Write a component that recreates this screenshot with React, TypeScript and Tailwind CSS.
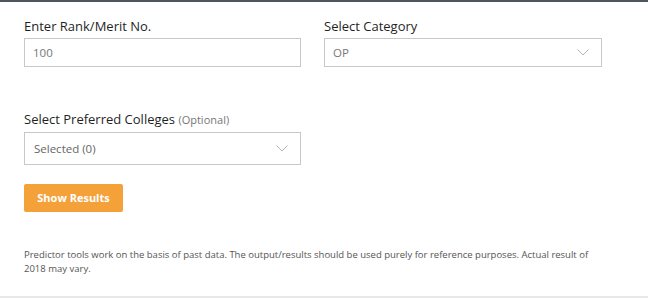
import React from 'react';

const Chevron = () => (
  <svg width="12" height="7" viewBox="0 0 12 7" fill="none" className="text-[#b5b5b5]">
    <path d="M0.5 0.5l5.5 5.5 5.5-5.5" stroke="currentColor" strokeWidth="1" />
  </svg>
);

const App: React.FC = () => {
  return (
    <div className="w-[648px] h-[298px] bg-white flex flex-col font-['Open_Sans',sans-serif] text-[#222]">
      <div className="h-[2px] bg-[#4d575c]" />
      <div className="flex-1 px-6 pt-[14px]">
        <div className="flex gap-[23px]">
          <div className="w-[277px]">
            <label className="block text-[13px] leading-[20px] text-[#1f1f1f]">Enter Rank/Merit No.</label>
            <div className="mt-[2px] h-[29px] border border-[#c8c8c8] flex items-center px-[8px] text-[11.5px] text-[#777]">100</div>
          </div>
          <div className="w-[278px]">
            <label className="block text-[13px] leading-[20px] text-[#1f1f1f]">Select Category</label>
            <div className="mt-[2px] h-[29px] border border-[#c8c8c8] flex items-center justify-between pl-[8px] pr-[12px] text-[11.5px] text-[#777]">
              <span>OP</span>
              <Chevron />
            </div>
          </div>
        </div>

        <div className="mt-[42px] w-[277px]">
          <label className="block text-[13px] leading-[20px] text-[#1f1f1f]">
            Select Preferred Colleges <span className="text-[11px] text-[#777]">(Optional)</span>
          </label>
          <div className="mt-[2px] h-[33px] border border-[#c8c8c8] flex items-center justify-between pl-[9px] pr-[12px] text-[11.5px] text-[#666]">
            <span>Selected (0)</span>
            <Chevron />
          </div>
        </div>

        <button className="mt-[19px] w-[99px] h-[28px] bg-[#f4a13a] rounded-[2px] text-white text-[11px] font-bold">
          Show Results
        </button>

        <p className="mt-[36px] w-[580px] text-[9.5px] leading-[14px] text-[#555]">
          Predictor tools work on the basis of past data. The output/results should be used purely for reference purposes. Actual result of 2018 may vary.
        </p>
      </div>
      <div className="h-[2px] bg-[#e8e8e8]" />
    </div>
  );
};

export default App;
